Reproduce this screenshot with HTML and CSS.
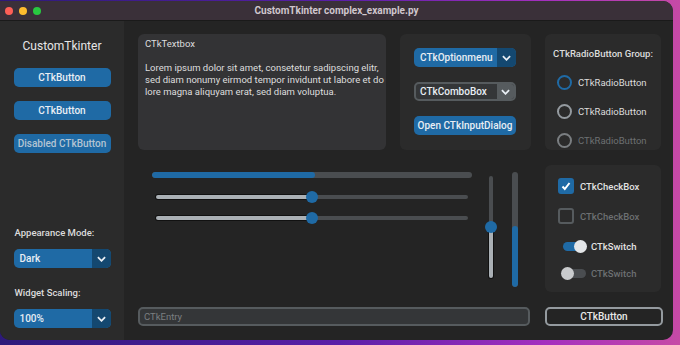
FILE: index.html
```html
<!DOCTYPE html>
<html lang="en">
<head>
    <meta charset="UTF-8">
    <title>CustomTkinter complex_example.py</title>
    <link rel="stylesheet" href="styles.css">
</head>
<body>
    <div class="window">
        <div class="titlebar">
            <div class="lights">
                <span class="light red"></span>
                <span class="light yellow"></span>
                <span class="light green"></span>
            </div>
            <div class="title">CustomTkinter complex_example.py</div>
        </div>
        <div class="app">
            <!-- sidebar -->
            <div class="sidebar">
                <div class="logo">CustomTkinter</div>
                <button class="btn side-btn">CTkButton</button>
                <button class="btn side-btn">CTkButton</button>
                <button class="btn side-btn disabled">Disabled CTkButton</button>
                <div class="spacer"></div>
                <div class="side-label">Appearance Mode:</div>
                <div class="option side-option"><span>Dark</span><i class="arrow"><svg viewBox="0 0 10 6"><path d="M1 1l4 4 4-4"/></svg></i></div>
                <div class="side-label">Widget Scaling:</div>
                <div class="option side-option"><span>100%</span><i class="arrow"><svg viewBox="0 0 10 6"><path d="M1 1l4 4 4-4"/></svg></i></div>
            </div>

            <div class="main">
                <div class="textbox">
                    <p>CTkTextbox</p>
                    <p>&nbsp;</p>
                    <p>Lorem ipsum dolor sit amet, consetetur sadipscing elitr,<br>sed diam nonumy eirmod tempor invidunt ut labore et do<br>lore magna aliquyam erat, sed diam voluptua.</p>
                </div>

                <div class="frame middle">
                    <div class="option"><span>CTkOptionmenu</span><i class="arrow"><svg viewBox="0 0 10 6"><path d="M1 1l4 4 4-4"/></svg></i></div>
                    <div class="combo"><span>CTkComboBox</span><i class="arrow"><svg viewBox="0 0 10 6"><path d="M1 1l4 4 4-4"/></svg></i></div>
                    <button class="btn dialog-btn">Open CTkInputDialog</button>
                </div>

                <div class="frame radios">
                    <div class="radio-title">CTkRadioButton Group:</div>
                    <div class="radio active"><span class="ring"></span>CTkRadioButton</div>
                    <div class="radio"><span class="ring"></span>CTkRadioButton</div>
                    <div class="radio disabled"><span class="ring"></span>CTkRadioButton</div>
                </div>

                <div class="sliders">
                    <div class="hsliders">
                        <div class="progress"><div class="fill" style="width: 51%"></div></div>
                        <div class="slider"><div class="track-fill" style="width: 50%"></div><span class="thumb" style="left: 50%"></span></div>
                        <div class="slider"><div class="track-fill" style="width: 50%"></div><span class="thumb" style="left: 50%"></span></div>
                    </div>
                    <div class="vslider"><div class="track-fill" style="height: 50%"></div><span class="thumb" style="top: 50%"></span></div>
                    <div class="vprogress"><div class="fill" style="height: 53%"></div></div>
                </div>

                <div class="frame checks">
                    <div class="check on"><span class="box"><svg viewBox="0 0 12 12"><path d="M2.5 6.5l2.3 2.5 4.7-6"/></svg></span>CTkCheckBox</div>
                    <div class="check disabled"><span class="box"></span>CTkCheckBox</div>
                    <div class="switch on"><span class="sw"><span class="knob"></span></span>CTkSwitch</div>
                    <div class="switch disabled"><span class="sw"><span class="knob"></span></span>CTkSwitch</div>
                </div>

                <div class="entry">CTkEntry</div>
                <button class="btn outline-btn">CTkButton</button>
            </div>
        </div>
    </div>
</body>
</html>
```

FILE: styles.css
```css
* {
    box-sizing: border-box;
}
body {
    margin: 0;
    width: 680px;
    height: 345px;
    overflow: hidden;
    font-family: Roboto, "Noto Sans", sans-serif;
    background: linear-gradient(90deg, #2d1a7a 0%, #5a1fa8 50%, #a42fbf 80%, #c64aa6 100%);
}
.window {
    margin-top: 1px;
    width: 673px;
    height: 339px;
    border-radius: 0 10px 10px 10px;
    overflow: hidden;
    background-color: #242424;
    display: flex;
    flex-direction: column;
}
.titlebar {
    height: 20px;
    background-color: #3a3039;
    border-bottom: 1px solid #1a1a1a;
    display: flex;
    align-items: center;
    position: relative;
}
.lights {
    display: flex;
    gap: 6px;
    padding-left: 5px;
}
.light {
    width: 8px;
    height: 8px;
    border-radius: 50%;
}
.red { background-color: #fe5f57; }
.yellow { background-color: #febc2e; }
.green { background-color: #28c840; }
.title {
    position: absolute;
    left: 0;
    right: 0;
    text-align: center;
    font-size: 10px;
    font-weight: 700;
    color: #cfc6cd;
}
.app {
    flex: 1;
    display: flex;
}
.sidebar {
    width: 124px;
    background-color: #2b2b2b;
    display: flex;
    flex-direction: column;
    align-items: center;
    padding: 18px 0 12px;
}
.logo {
    font-size: 12px;
    color: #e6e6e6;
    margin-bottom: 15px;
}
.btn {
    font-family: inherit;
    border: none;
    border-radius: 5px;
    background-color: #1f6aa5;
    color: #e8eef4;
    font-size: 10px;
    font-weight: 500;
    height: 19px;
    padding: 0;
}
.side-btn {
    width: 97px;
    margin-bottom: 14px;
}
.side-btn.disabled {
    color: #b3c4d3;
}
.spacer {
    flex: 1;
}
.side-label {
    width: 97px;
    font-size: 9.5px;
    line-height: 12px;
    font-weight: 500;
    color: #dcdcdc;
    margin-bottom: 10px;
    padding-left: 1px;
}
.side-option {
    width: 97px;
    margin-bottom: 19px;
}
.side-option:last-child {
    margin-bottom: 0;
}
.option, .combo {
    height: 19px;
    border-radius: 5px;
    display: flex;
    align-items: stretch;
    font-size: 10px;
    font-weight: 500;
    color: #e8eef4;
    overflow: hidden;
}
.option {
    background-color: #1f6aa5;
}
.option span, .combo span {
    flex: 1;
    display: flex;
    align-items: center;
    padding-left: 6px;
}
.arrow {
    width: 19px;
    display: flex;
    align-items: center;
    justify-content: center;
}
.option .arrow {
    background-color: #144870;
}
.arrow svg {
    width: 9px;
    height: 6px;
    fill: none;
    stroke: #e8eef4;
    stroke-width: 2;
}
.main {
    flex: 1;
    display: grid;
    grid-template-columns: 248px 131px 116px;
    grid-template-rows: 116px 127px 19px;
    column-gap: 14px;
    row-gap: 15px;
    padding: 13px 0 0 14px;
}
.textbox {
    background-color: #333335;
    border-radius: 6px;
    padding: 4px 7px;
    font-size: 9.5px;
    line-height: 12px;
    color: #dedede;
    white-space: nowrap;
}
.textbox p {
    margin: 0;
}
.frame {
    background-color: #2b2b2b;
    border-radius: 6px;
}
.middle {
    display: flex;
    flex-direction: column;
    gap: 15px;
    padding: 14px 15px 0 14px;
}
.combo {
    background-color: #343638;
    border: 2px solid #565b5e;
}
.combo span {
    padding-left: 4px;
}
.combo .arrow {
    background-color: #565b5e;
    width: 17px;
}
.dialog-btn {
    width: 102px;
}
.radios {
    display: flex;
    flex-direction: column;
    align-items: center;
    padding-top: 14px;
}
.radio-title {
    font-size: 9.5px;
    font-weight: 500;
    color: #dcdcdc;
    margin-bottom: 16px;
}
.radio {
    display: flex;
    align-items: center;
    gap: 6px;
    width: 92px;
    font-size: 9.5px;
    color: #dcdcdc;
    margin-bottom: 14px;
}
.ring {
    width: 15px;
    height: 15px;
    border-radius: 50%;
    border: 2px solid #949a9f;
}
.radio.active .ring {
    border-color: #1f6aa5;
}
.radio.disabled {
    color: #6d7072;
}
.radio.disabled .ring {
    border-color: #7a7e81;
}
.sliders {
    grid-column: 1 / 3;
    display: flex;
    padding: 7px 0 5px 14px;
}
.hsliders {
    width: 320px;
    display: flex;
    flex-direction: column;
    gap: 17px;
}
.progress {
    height: 6px;
    border-radius: 3px;
    background-color: #4a4d50;
    overflow: hidden;
}
.progress .fill {
    height: 100%;
    background-color: #1f6aa5;
    border-radius: 3px;
}
.slider {
    position: relative;
    height: 4px;
    margin: 0 4px;
    border-radius: 2px;
    background-color: #4a4d50;
}
.track-fill {
    height: 100%;
    background-color: #aab0b5;
    border-radius: 2px;
    box-shadow: 0 0 0 1px #111;
}
.thumb {
    position: absolute;
    width: 12px;
    height: 12px;
    border-radius: 50%;
    background-color: #1f6aa5;
}
.slider .thumb {
    top: -4px;
    margin-left: -6px;
}
.vslider {
    position: relative;
    width: 4px;
    margin: 4px 0 9px 17px;
    border-radius: 2px;
    background-color: #4a4d50;
    display: flex;
    flex-direction: column;
    justify-content: flex-end;
}
.vslider .track-fill {
    width: 100%;
}
.vslider .thumb {
    left: -4px;
    margin-top: -6px;
}
.vprogress {
    width: 6px;
    margin-left: 19px;
    border-radius: 3px;
    background-color: #4a4d50;
    display: flex;
    flex-direction: column;
    justify-content: flex-end;
    overflow: hidden;
}
.vprogress .fill {
    background-color: #1f6aa5;
    border-radius: 3px;
}
.checks {
    display: flex;
    flex-direction: column;
    padding: 13px 0 0 13px;
}
.check, .switch {
    display: flex;
    align-items: center;
    font-size: 9.5px;
    font-weight: 500;
    color: #e2e2e2;
}
.check {
    gap: 6px;
    margin-bottom: 14px;
}
.box {
    width: 16px;
    height: 16px;
    border-radius: 3px;
    border: 2px solid #565b5e;
    display: flex;
    align-items: center;
    justify-content: center;
}
.check.on .box {
    background-color: #1f6aa5;
    border-color: #1f6aa5;
}
.box svg {
    width: 12px;
    height: 12px;
    fill: none;
    stroke: #fff;
    stroke-width: 2;
}
.check.disabled, .switch.disabled {
    color: #6d7072;
}
.switch {
    gap: 5px;
    padding-left: 5px;
    margin-top: 2px;
    margin-bottom: 12px;
    height: 14px;
}
.sw {
    position: relative;
    width: 23px;
    height: 9px;
    border-radius: 5px;
    background-color: #1f6aa5;
}
.knob {
    position: absolute;
    top: -2px;
    right: -1px;
    width: 13px;
    height: 13px;
    border-radius: 50%;
    background-color: #e4e6e8;
}
.switch.disabled .sw {
    background-color: #4a4d50;
}
.switch.disabled .knob {
    right: auto;
    left: -2px;
    background-color: #c9cbcd;
}
.entry {
    grid-column: 1 / 3;
    width: 392px;
    background-color: #343638;
    border: 2px solid #565b5e;
    border-radius: 5px;
    font-size: 9.5px;
    color: #7b7e80;
    display: flex;
    align-items: center;
    padding-left: 4px;
}
.outline-btn {
    width: 118px;
    background-color: transparent;
    border: 2px solid #949a9f;
    color: #e8e8e8;
}
```
